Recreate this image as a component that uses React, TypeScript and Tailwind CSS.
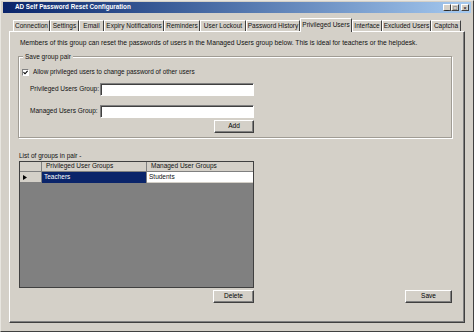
import React from 'react'

interface Tab {
  label: string;
  width: number;
}

// tab widths measured from the original dialog
const tabs: Tab[] = [
  { label: 'Connection', width: 37 },
  { label: 'Settings', width: 29 },
  { label: 'Email', width: 25 },
  { label: 'Expiry Notifications', width: 60 },
  { label: 'Reminders', width: 36 },
  { label: 'User Lockout', width: 46 },
  { label: 'Password History', width: 54 },
  { label: 'Privileged Users', width: 52 },
  { label: 'Interface', width: 30 },
  { label: 'Excluded Users', width: 49 },
  { label: 'Captcha', width: 30 },
]

const active = 'Privileged Users'

const Btn: React.FC<{ label: string; className?: string }> = ({ label, className }) => (
  <button
    type="button"
    className={
      'h-[13px] border border-t-white border-l-white border-r-[#404040] border-b-[#404040] bg-[#d4d0c8] text-[6.5px] leading-none text-black shadow-[inset_-1px_-1px_0_#808080] ' +
      (className ?? '')
    }
  >
    {label}
  </button>
)

const TextBox: React.FC = () => (
  <div className="h-[13px] w-[154px] border border-t-[#808080] border-l-[#808080] border-r-white border-b-white bg-white shadow-[inset_1px_1px_0_#404040]" />
)

const App: React.FC = () => {
  return (
    <div className="w-[474px] h-[332px] bg-[#d4d0c8] font-['Liberation_Sans',Arial,sans-serif] text-[#111] border border-t-[#e8e6e0] border-l-[#e8e6e0] border-r-[#404040] border-b-[#404040] flex flex-col px-[2px] pt-[1px] overflow-hidden">
      {/* title bar */}
      <div className="h-[11px] shrink-0 flex items-center justify-between bg-gradient-to-r from-[#0a246a] to-[#a6caf0] pl-[12px] pr-[2px]">
        <span className="text-[6.3px] font-bold text-white leading-none">AD Self Password Reset Configuration</span>
        <div className="flex items-center">
          {['_', '□', '×'].map((g, i) => (
            <span
              key={g}
              className={
                'w-[8px] h-[7px] flex items-center justify-center bg-[#d4d0c8] border border-t-white border-l-white border-r-[#404040] border-b-[#404040] text-[6px] leading-none text-black ' +
                (i === 2 ? 'ml-[2px]' : '')
              }
            >
              {g}
            </span>
          ))}
        </div>
      </div>

      {/* tabs */}
      <div className="flex items-end h-[17px] shrink-0 pl-[10px] mt-[1px]">
        {tabs.map((t) => {
          const sel = t.label === active
          return (
            <div
              key={t.label}
              style={{ width: t.width }}
              className={
                'flex items-center justify-center text-[6.5px] leading-none whitespace-nowrap border-t border-l border-r border-t-white border-l-white border-r-[#404040] bg-[#d4d0c8] ' +
                (sel ? 'h-[14px] relative z-10 -mb-[1px]' : 'h-[11px]')
              }
            >
              {t.label}
            </div>
          )
        })}
      </div>

      {/* tab panel */}
      <div className="ml-[6px] w-[456px] h-[292px] border border-t-white border-l-white border-r-[#404040] border-b-[#404040] shadow-[inset_-1px_-1px_0_#808080] flex flex-col">
        <p className="text-[6.7px] leading-[9px] mt-[6px] ml-[10px]">
          Members of this group can reset the passwords of users in the Managed Users group below. This is ideal for teachers or the helpdesk.
        </p>

        {/* Save group pair */}
        <div className="relative mt-[9px] ml-[8px] w-[434px] h-[82px] border border-[#a09c94] shadow-[1px_1px_0_white,inset_1px_1px_0_white] flex flex-col">
          <span className="absolute -top-[5px] left-[4px] bg-[#d4d0c8] px-[2px] text-[6.5px] leading-[9px]">Save group pair</span>
          <div className="flex items-center mt-[12px] ml-[3px] gap-[4px]">
            <span className="w-[7px] h-[7px] bg-white border border-t-[#808080] border-l-[#808080] border-r-white border-b-white flex items-center justify-center">
              <svg width="5" height="5" viewBox="0 0 5 5">
                <path d="M0.5 2.2 L2 3.8 L4.6 0.8" stroke="black" strokeWidth="1.1" fill="none" />
              </svg>
            </span>
            <span className="text-[6.4px] leading-none">Allow privileged users to change password of other users</span>
          </div>
          <div className="flex items-center mt-[7px]">
            <span className="w-[81px] pl-[11px] text-[6.5px] leading-none">Privileged Users Group:</span>
            <TextBox />
          </div>
          <div className="flex items-center mt-[9px]">
            <span className="w-[81px] pl-[11px] text-[6.5px] leading-none">Managed Users Group:</span>
            <TextBox />
          </div>
          <div className="flex ml-[195px] mt-[2px]">
            <Btn label="Add" className="w-[40px]" />
          </div>
        </div>

        <p className="text-[6.5px] leading-[9px] mt-[13px] ml-[9px]">List of groups in pair -</p>

        {/* grid */}
        <div className="ml-[9px] mt-[1px] w-[235px] h-[127px] bg-[#808080] border border-[#404040] flex flex-col text-[6.5px] leading-none">
          <div className="flex h-[10px]">
            <div className="w-[22px] bg-[#d4d0c8] border-r border-b border-[#808080]" />
            <div className="w-[105px] bg-[#d4d0c8] border-r border-b border-[#808080] flex items-center pl-[4px]">Privileged User Groups</div>
            <div className="flex-1 bg-[#d4d0c8] border-b border-[#808080] flex items-center pl-[4px]">Managed User Groups</div>
          </div>
          <div className="flex h-[11px]">
            <div className="w-[22px] bg-[#d4d0c8] border-r border-b border-[#808080] flex items-center pl-[3px]">
              <svg width="4" height="5" viewBox="0 0 4 5">
                <path d="M0 0 L4 2.5 L0 5 Z" fill="black" />
              </svg>
            </div>
            <div className="w-[105px] bg-[#0a246a] text-white flex items-center pl-[2px] border-r border-[#808080]">Teachers</div>
            <div className="flex-1 bg-white flex items-center pl-[2px] border-b border-[#d4d0c8]">Students</div>
          </div>
        </div>

        <div className="flex mt-[2px]">
          <Btn label="Delete" className="ml-[203px] w-[41px]" />
          <Btn label="Save" className="ml-[151px] w-[47px]" />
        </div>
      </div>
    </div>
  )
}

export default App
